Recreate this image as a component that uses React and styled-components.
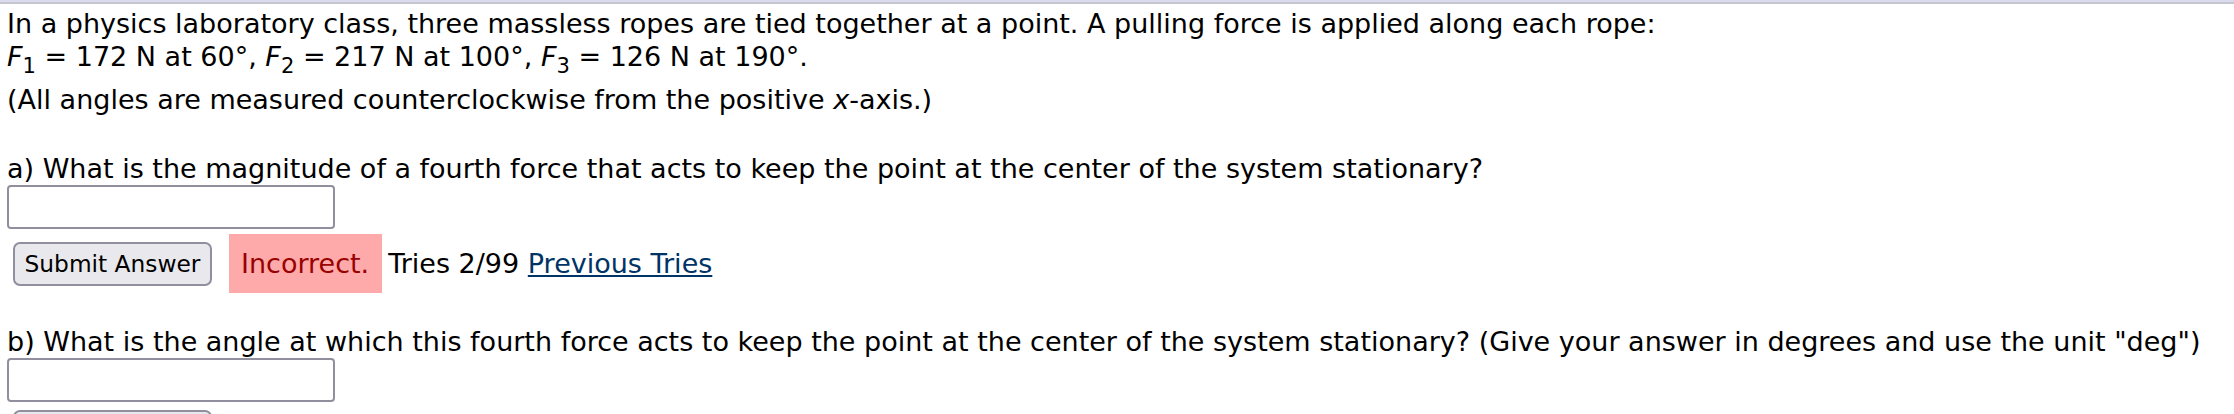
import styled, { createGlobalStyle } from "styled-components";

const GlobalStyle = createGlobalStyle`
  body {
    margin: 0;
    background: #ffffff;
    font-family: "DejaVu Sans", Verdana, sans-serif;
    font-size: 27px;
    color: #000000;
  }
`;

export default function App() {
  return (
    <>
      <GlobalStyle />
      <Page>
        <Rule />
        <Problem>
          <Line>
            In a physics laboratory class, three massless ropes are tied together at a point. A pulling force is
            applied along each rope:
          </Line>
          <Line $extra={10}>
            <Var>F</Var>
            <Sub>1</Sub> = 172 N at 60°, <Var>F</Var>
            <Sub>2</Sub> = 217 N at 100°, <Var>F</Var>
            <Sub>3</Sub> = 126 N at 190°.
          </Line>
          <Line>
            (All angles are measured counterclockwise from the positive <Var>x</Var>-axis.)
          </Line>
        </Problem>

        <Part $top={36}>
          <Line>a) What is the magnitude of a fourth force that acts to keep the point at the center of the system stationary?</Line>
          <AnswerInput type="text" />
          <SubmitRow>
            <SubmitButton>Submit Answer</SubmitButton>
            <Feedback>Incorrect.</Feedback>
            <Tries>
              Tries 2/99 <PrevLink href="#">Previous Tries</PrevLink>
            </Tries>
          </SubmitRow>
        </Part>

        <Part $top={32}>
          <Line>
            b) What is the angle at which this fourth force acts to keep the point at the center of the system
            stationary? (Give your answer in degrees and use the unit "deg")
          </Line>
          <AnswerInput type="text" />
          <SubmitRow>
            <SubmitButton>Submit Answer</SubmitButton>
          </SubmitRow>
        </Part>
      </Page>
    </>
  );
}

const Page = styled.div`
  height: 414px;
  overflow: hidden;
`;

const Rule = styled.div`
  height: 4px;
  background: linear-gradient(#dadaee 50%, #c6c6d0 50%);
`;

const Problem = styled.div`
  margin-top: 3px;
  padding-left: 7px;
`;

const Line = styled.div`
  line-height: 33px;
  white-space: nowrap;
  padding-bottom: ${(props) => props.$extra || 0}px;
`;

const Var = styled.i`
  font-style: italic;
`;

const Sub = styled.sub`
  font-size: 0.78em;
  line-height: 0;
  vertical-align: -7px;
`;

const Part = styled.div`
  margin-top: ${(props) => props.$top}px;
  padding-left: 7px;
`;

const AnswerInput = styled.input`
  display: block;
  box-sizing: border-box;
  width: 328px;
  height: 44px;
  margin: 0;
  border: 2px solid #8f8f9d;
  border-radius: 4px;
  background: #ffffff;
`;

const SubmitRow = styled.div`
  display: flex;
  align-items: center;
  margin-top: 5px;
`;

const SubmitButton = styled.button`
  box-sizing: border-box;
  width: 199px;
  height: 44px;
  margin: 3px 0 3px 6px;
  padding: 0;
  border: 2px solid #8f8f9d;
  border-radius: 7px;
  background: #e9e9ed;
  font-family: "DejaVu Sans", Verdana, sans-serif;
  font-size: 23.3px;
  color: #000000;
`;

const Feedback = styled.span`
  margin-left: 17px;
  padding: 13px 13px 13px 12px;
  line-height: 33px;
  background: #ffaaaa;
  color: #990000;
`;

const Tries = styled.span`
  margin-left: 6px;
  line-height: 33px;
`;

const PrevLink = styled.a`
  color: #003366;
  text-decoration: underline;
`;
